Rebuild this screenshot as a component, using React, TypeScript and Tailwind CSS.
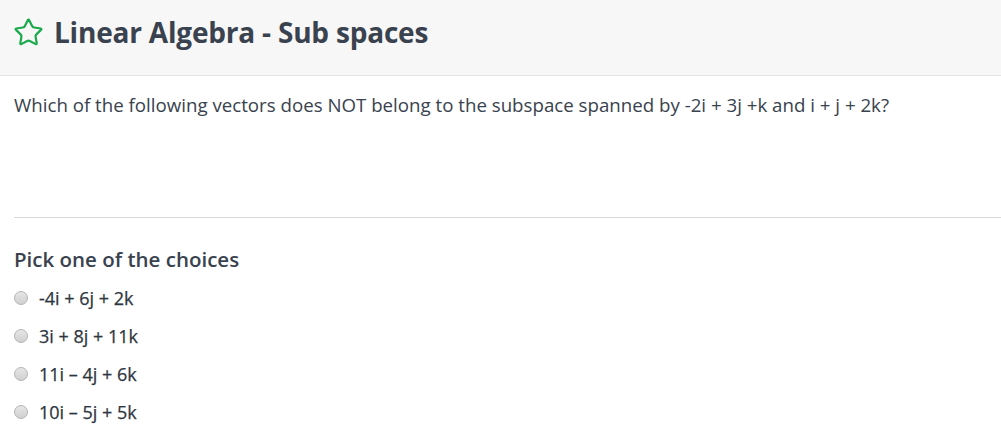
import { Star } from "lucide-react";

const choices = ["-4i + 6j + 2k", "3i + 8j + 11k", "11i – 4j + 6k", "10i – 5j + 5k"];

export default function App() {
  return (
    <div className="min-h-screen bg-white font-['Open_Sans',sans-serif] text-[#39424e]">
      <header className="flex h-[76px] items-center gap-[10px] border-b border-[#e3e3e3] bg-[#f7f7f7] px-[13px] pb-[11px]">
        <Star className="h-[31px] w-[31px] text-[#1ba94c]" strokeWidth={1.7} />
        <h1 className="text-[28px] font-bold tracking-[-0.2px]">Linear Algebra - Sub spaces</h1>
      </header>

      <div className="pl-[14px]">
        <p className="pt-[16px] text-[18.7px] leading-[26px] text-[#39424e]">
          Which of the following vectors does NOT belong to the subspace spanned by -2i + 3j +k and i + j + 2k?
        </p>
        <div className="mt-[99px] border-t border-[#d9d9d9]" />

        <h2 className="mt-[27px] text-[20.5px] font-semibold leading-[28px]">Pick one of the choices</h2>
        <ul className="mt-[6px] flex flex-col">
          {choices.map((c) => (
            <li key={c} className="flex h-[38px] items-center gap-[11px]">
              <span className="h-[14px] w-[14px] rounded-full border border-[#b5b5b5] bg-gradient-to-b from-[#e6e6e6] to-[#d0d0d0]" />
              <span className="text-[18px] text-[#2e3640] [-webkit-text-stroke:0.25px_#2e3640]">{c}</span>
            </li>
          ))}
        </ul>
      </div>
    </div>
  );
}
